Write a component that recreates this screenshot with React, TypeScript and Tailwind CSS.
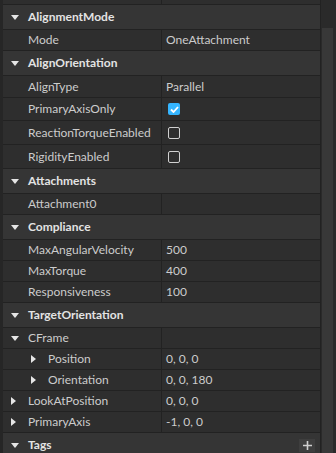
import React from "react";

type Row =
  | { kind: "header"; label: string; h: string; plus?: boolean }
  | { kind: "prop"; label: string; value?: string; h: string; check?: boolean | null; indent?: number; arrow?: "down" | "right" };

const rows: Row[] = [
  { kind: "header", label: "AlignmentMode", h: "h-[25px]" },
  { kind: "prop", label: "Mode", value: "OneAttachment", h: "h-[21px]" },
  { kind: "header", label: "AlignOrientation", h: "h-[25px]" },
  { kind: "prop", label: "AlignType", value: "Parallel", h: "h-[22px]" },
  { kind: "prop", label: "PrimaryAxisOnly", check: true, h: "h-[23px]" },
  { kind: "prop", label: "ReactionTorqueEnabled", check: false, h: "h-[24px]" },
  { kind: "prop", label: "RigidityEnabled", check: false, h: "h-[24px]" },
  { kind: "header", label: "Attachments", h: "h-[25px]" },
  { kind: "prop", label: "Attachment0", value: "", h: "h-[21px]" },
  { kind: "header", label: "Compliance", h: "h-[25px]" },
  { kind: "prop", label: "MaxAngularVelocity", value: "500", h: "h-[21px]" },
  { kind: "prop", label: "MaxTorque", value: "400", h: "h-[21px]" },
  { kind: "prop", label: "Responsiveness", value: "100", h: "h-[21px]" },
  { kind: "header", label: "TargetOrientation", h: "h-[25px]" },
  { kind: "prop", label: "CFrame", value: "", h: "h-[21px]", arrow: "down" },
  { kind: "prop", label: "Position", value: "0, 0, 0", h: "h-[21px]", arrow: "right", indent: 1 },
  { kind: "prop", label: "Orientation", value: "0, 0, 180", h: "h-[21px]", arrow: "right", indent: 1 },
  { kind: "prop", label: "LookAtPosition", value: "0, 0, 0", h: "h-[21px]", arrow: "right" },
  { kind: "prop", label: "PrimaryAxis", value: "-1, 0, 0", h: "h-[21px]", arrow: "right" },
  { kind: "header", label: "Tags", h: "h-[25px]", plus: true },
];

function Down() {
  return (
    <svg width="8" height="5" viewBox="0 0 8 5" className="shrink-0">
      <path d="M0 0 L8 0 L4 5 Z" fill="#e6e6e6" />
    </svg>
  );
}
function Right() {
  return (
    <svg width="5" height="8" viewBox="0 0 5 8" className="shrink-0">
      <path d="M0 0 L5 4 L0 8 Z" fill="#e6e6e6" />
    </svg>
  );
}

function Check({ on }: { on: boolean }) {
  if (on)
    return (
      <div className="w-[12px] h-[12px] rounded-[2px] bg-[#35b5ff] flex items-center justify-center">
        <svg width="9" height="7" viewBox="0 0 9 7">
          <path d="M1 3.5 L3.5 6 L8 1" stroke="#ffffff" strokeWidth="1.8" fill="none" />
        </svg>
      </div>
    );
  return <div className="w-[12px] h-[12px] rounded-[2px] border border-[#d0d0d0]" />;
}

export default function App() {
  return (
    <div
      className="w-[336px] h-[453px] overflow-hidden bg-[#2e2e2e] flex text-[12px] text-[#cccccc]"
      style={{ fontFamily: "Lato, 'Noto Sans', sans-serif" }}
    >
      <div className="w-[3px] bg-[#262626] shrink-0" />
      <div className="flex-1 flex flex-col min-w-0">
        <div className="h-[5px] border-b border-[#222222] flex shrink-0">
          <div className="w-[159px] border-r border-[#222222]" />
          <div className="flex-1 border-r border-[#222222]" />
        </div>
        {rows.map((r, i) =>
          r.kind === "header" ? (
            <div
              key={i}
              className={`${r.h} shrink-0 box-border bg-[#353535] border-b border-[#222222] border-r flex items-center pl-[8px] pr-[5px]`}
            >
              <Down />
              <span className="ml-[9px] font-bold text-[12px] text-[#e3e3e3]">{r.label}</span>
              {r.plus && (
                <div className="ml-auto w-[16px] h-[13px] bg-[#3e3e3e] flex items-center justify-center">
                  <svg width="9" height="9" viewBox="0 0 9 9">
                    <path d="M4.5 0 V9 M0 4.5 H9" stroke="#cfcfcf" strokeWidth="1.6" />
                  </svg>
                </div>
              )}
            </div>
          ) : (
            <div key={i} className={`${r.h} shrink-0 box-border border-b border-[#222222] flex`}>
              <div
                className={`w-[159px] border-r border-[#222222] flex items-center ${
                  r.indent ? "pl-[28px]" : "pl-[8px]"
                }`}
              >
                <div className="w-[17px] flex items-center">
                  {r.arrow === "down" && <Down />}
                  {r.arrow === "right" && <Right />}
                </div>
                <span className="whitespace-nowrap">{r.label}</span>
              </div>
              <div className="flex-1 flex items-center pl-[4px] border-r border-[#222222]">
                {r.check !== undefined && r.check !== null ? (
                  <div className="ml-[2px]">
                    <Check on={r.check} />
                  </div>
                ) : (
                  <span className="whitespace-nowrap">{r.value}</span>
                )}
              </div>
            </div>
          )
        )}
      </div>
      <div className="w-[15px] shrink-0 bg-[#2a2a2a] flex flex-col">
        <div className="h-[28px] shrink-0" />
        <div className="flex-1 mx-[1px] mr-[3px] bg-[#383838]" />
      </div>
    </div>
  );
}
